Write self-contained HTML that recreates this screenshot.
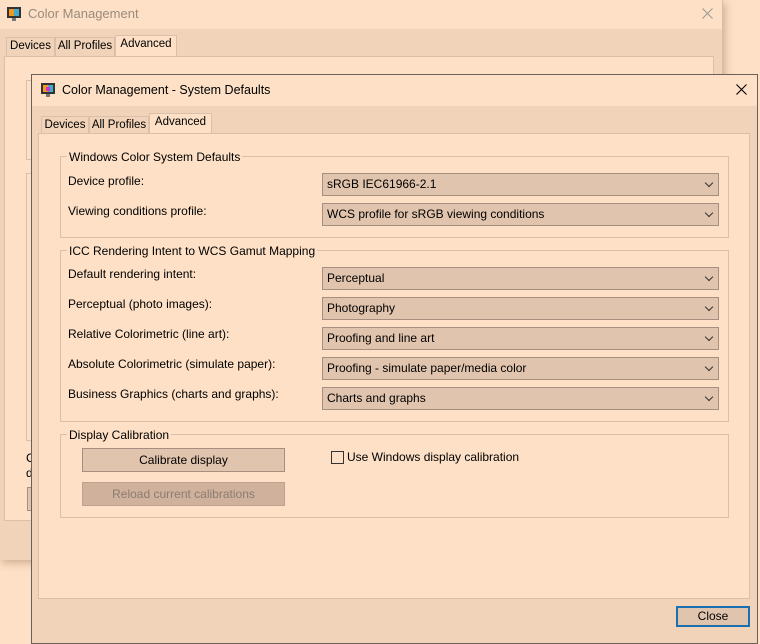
<!DOCTYPE html>
<html><head><style>
*{margin:0;padding:0;box-sizing:border-box}
body{width:760px;height:634px;overflow:hidden;background:#fde0c5;font-family:"Liberation Sans",sans-serif;font-size:12px;color:#000;position:relative}
.a{position:absolute}
.t{position:absolute;white-space:nowrap;line-height:14px}
.grp{position:absolute;border:1px solid #dcbfa8}
.leg{position:absolute;background:#fde0c5;padding:0 2px;line-height:14px;white-space:nowrap}
.cb{position:absolute;left:322px;width:397px;height:23px;background:#e1c4ad;border:1px solid #a68f7e;padding-left:4px;line-height:20px}
.cb:after{content:"";position:absolute;right:6px;top:6px;width:5px;height:5px;border-right:1px solid #333;border-bottom:1px solid #333;transform:rotate(45deg)}
.tab{position:absolute;border:1px solid #dcbfa8;border-bottom:none;text-align:center;line-height:17px;font-size:11.5px}
.icon{position:absolute;width:14px;height:14px}
</style></head><body>
<!-- outer window -->
<div class="a" style="left:0;top:0;width:723px;height:560px;background:#f0d3b8;border-right:1px solid #d8bca5;box-shadow:2px 3px 8px rgba(120,80,50,.35)">
  <div class="a" style="left:0;top:0;width:722px;height:29px;background:#fde0c5"></div>
  <svg class="icon" style="left:7px;top:7px" viewBox="0 0 14 14"><rect x="0" y="0" width="14" height="11" fill="#333"/><rect x="2" y="2" width="10" height="7" fill="#d45"/><rect x="2" y="2" width="5" height="7" fill="#e92"/><rect x="7" y="2" width="5" height="7" fill="#4ac"/><rect x="5" y="11" width="4" height="3" fill="#777"/></svg>
  <div class="t" style="left:28px;top:7px;color:#9a8a7c;font-size:13px">Color Management</div>
  <svg class="a" style="left:702px;top:8px" width="11" height="11" viewBox="0 0 11 11"><path d="M0.5 0.5L10.5 10.5M10.5 0.5L0.5 10.5" stroke="#999" stroke-width="1"/></svg>
  <div class="tab" style="left:6px;top:37px;width:49px;height:19px">Devices</div>
  <div class="tab" style="left:55px;top:37px;width:60px;height:19px">All Profiles</div>
  <div class="tab" style="left:115px;top:35px;width:62px;height:22px;background:#fde0c5">Advanced</div>
  <div class="a" style="left:4px;top:56px;width:710px;height:465px;background:#fde0c5;border:1px solid #dcbfa8"></div>
  <div class="grp" style="left:26px;top:80px;width:690px;height:80px"></div>
  <div class="grp" style="left:26px;top:173px;width:690px;height:268px"></div>
  <div class="t" style="left:26px;top:451px">C</div>
  <div class="t" style="left:26px;top:466px">d</div>
  <div class="a" style="left:27px;top:487px;width:20px;height:24px;background:#e1c4ad;border:1px solid #a68f7e"></div>
</div>
<!-- inner window -->
<div class="a" style="left:31px;top:74px;width:727px;height:570px;background:#f0d3b8;border:1px solid #6b5f57">
  <div class="a" style="left:0;top:0;width:725px;height:31px;background:#fde0c5"></div>
  <svg class="icon" style="left:9px;top:8px" viewBox="0 0 14 14"><rect x="0" y="0" width="14" height="11" fill="#333"/><rect x="2" y="2" width="5" height="7" fill="#e92"/><rect x="7" y="2" width="5" height="7" fill="#4ac"/><rect x="5" y="4" width="4" height="4" fill="#c3c"/><rect x="5" y="11" width="4" height="3" fill="#777"/></svg>
  <div class="t" style="left:30px;top:8px;font-size:12.5px">Color Management - System Defaults</div>
  <svg class="a" style="left:704px;top:9px" width="11" height="11" viewBox="0 0 11 11"><path d="M0.5 0.5L10.5 10.5M10.5 0.5L0.5 10.5" stroke="#000" stroke-width="1.1"/></svg>
  <div class="tab" style="left:9px;top:41px;width:48px;height:18px">Devices</div>
  <div class="tab" style="left:57px;top:41px;width:60px;height:18px">All Profiles</div>
  <div class="tab" style="left:117px;top:38px;width:63px;height:21px;background:#fde0c5">Advanced</div>
  <div class="a" style="left:6px;top:58px;width:712px;height:466px;background:#fde0c5;border:1px solid #dcbfa8"></div>
  <div class="a" style="left:644px;top:531px;width:74px;height:21px;background:#e1c4ad;border:2px solid #1a6fb0;text-align:center;line-height:17px">Close</div>
</div>
<!-- groups -->
<div class="grp" style="left:60px;top:156px;width:669px;height:82px"></div>
<div class="leg" style="left:67px;top:150px">Windows Color System Defaults</div>
<div class="t" style="left:68px;top:174px">Device profile:</div>
<div class="t" style="left:68px;top:204px">Viewing conditions profile:</div>
<div class="cb" style="top:173px">sRGB IEC61966-2.1</div>
<div class="cb" style="top:203px">WCS profile for sRGB viewing conditions</div>

<div class="grp" style="left:60px;top:250px;width:669px;height:172px"></div>
<div class="leg" style="left:67px;top:244px">ICC Rendering Intent to WCS Gamut Mapping</div>
<div class="t" style="left:68px;top:267px">Default rendering intent:</div>
<div class="t" style="left:68px;top:297px">Perceptual (photo images):</div>
<div class="t" style="left:68px;top:327px">Relative Colorimetric (line art):</div>
<div class="t" style="left:68px;top:357px">Absolute Colorimetric (simulate paper):</div>
<div class="t" style="left:68px;top:387px">Business Graphics (charts and graphs):</div>
<div class="cb" style="top:267px">Perceptual</div>
<div class="cb" style="top:297px">Photography</div>
<div class="cb" style="top:327px">Proofing and line art</div>
<div class="cb" style="top:357px">Proofing - simulate paper/media color</div>
<div class="cb" style="top:387px">Charts and graphs</div>

<div class="grp" style="left:60px;top:434px;width:669px;height:84px"></div>
<div class="leg" style="left:67px;top:428px">Display Calibration</div>
<div class="a" style="left:82px;top:448px;width:203px;height:24px;background:#e1c4ad;border:1px solid #a68f7e;text-align:center;line-height:22px">Calibrate display</div>
<div class="a" style="left:82px;top:482px;width:203px;height:24px;background:#cfb19c;border:1px solid #bfa28e;text-align:center;line-height:22px;color:#8c7c70">Reload current calibrations</div>
<div class="a" style="left:331px;top:451px;width:13px;height:13px;border:1px solid #333"></div>
<div class="t" style="left:347px;top:450px">Use Windows display calibration</div>
</body></html>
